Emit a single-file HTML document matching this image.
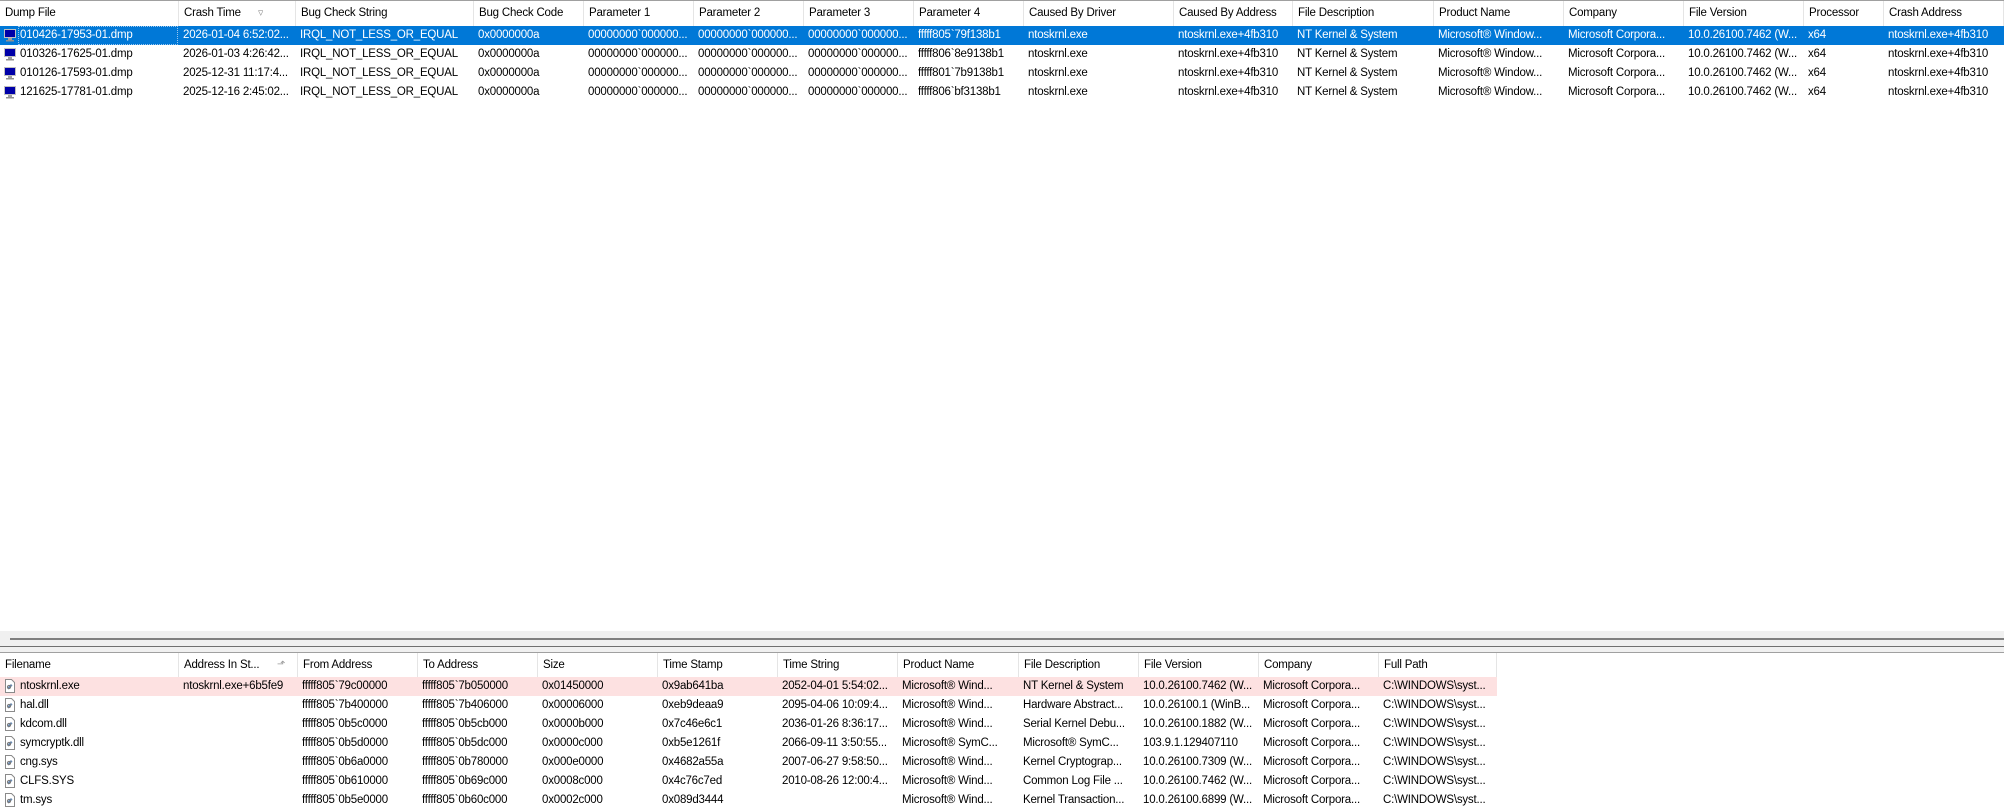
<!DOCTYPE html>
<html><head><meta charset="utf-8"><style>
*{margin:0;padding:0;box-sizing:border-box}
body{width:2004px;height:802px;overflow:hidden;background:#fff;font-family:"Liberation Sans",sans-serif;font-size:11.5px;letter-spacing:-0.2px;color:#000;position:relative}
.a{position:absolute;white-space:nowrap;overflow:hidden}
.h{position:absolute;height:26px;line-height:26px;border-right:1px solid #e5e5e5;padding-left:5px;white-space:nowrap;overflow:hidden}
.c{position:absolute;height:19px;line-height:19px;padding-left:4px;white-space:nowrap;overflow:hidden}
.mon{position:absolute;width:14px;height:14px}
.doc{position:absolute;width:12px;height:14px}
</style></head><body>
<div class="a" style="left:0;top:0;width:2004px;height:1px;background:#a0a0a0"></div>
<div class="a" style="left:0;top:26px;width:2004px;height:19px;background:#0078d7"></div>
<div class="a" style="left:18px;top:26px;width:160px;height:19px;border:1px dotted #9cc8f0"></div>
<div class="a" style="left:0;top:631px;width:2004px;height:21px;background:#f0f0f0"></div>
<div class="a" style="left:10px;top:638px;width:1994px;height:2px;background:#808080"></div>
<div class="a" style="left:0;top:646px;width:2004px;height:1px;background:#707070"></div>
<div class="a" style="left:0;top:652px;width:2004px;height:1px;background:#a0a0a0"></div>
<div class="a" style="left:0;top:677px;width:1497px;height:19px;background:#fde1e1"></div>
<script>
function mk(h){document.body.insertAdjacentHTML('beforeend',h)}
var tx=[0,179,296,474,584,694,804,914,1024,1174,1293,1434,1564,1684,1804,1884,2004];
var th=["Dump File","Crash Time","Bug Check String","Bug Check Code","Parameter 1","Parameter 2","Parameter 3","Parameter 4","Caused By Driver","Caused By Address","File Description","Product Name","Company","File Version","Processor","Crash Address"];
for(var i=0;i<th.length;i++)mk('<div class="h" style="top:1px;height:25px;line-height:25px;left:'+tx[i]+'px;width:'+(tx[i+1]-tx[i])+'px">'+th[i]+'</div>');
mk('<div class="a" style="left:258px;top:6px;color:#999;font-size:11px">&#x25BF;</div>');
var z="00000000`000000...";
var tr=[["010426-17953-01.dmp","2026-01-04 6:52:02...","fffff805`79f138b1"],["010326-17625-01.dmp","2026-01-03 4:26:42...","fffff806`8e9138b1"],["010126-17593-01.dmp","2025-12-31 11:17:4...","fffff801`7b9138b1"],["121625-17781-01.dmp","2025-12-16 2:45:02...","fffff806`bf3138b1"]];
for(var r=0;r<4;r++){var y=26+19*r,col=r==0?'#fff':'#000';
var v=[tr[r][0],tr[r][1],"IRQL_NOT_LESS_OR_EQUAL","0x0000000a",z,z,z,tr[r][2],"ntoskrnl.exe","ntoskrnl.exe+4fb310","NT Kernel &amp; System","Microsoft® Window...","Microsoft Corpora...","10.0.26100.7462 (W...","x64","ntoskrnl.exe+4fb310"];
mk('<svg class="mon" style="left:3px;top:'+(y+2)+'px" viewBox="0 0 14 14"><rect x="1" y="1" width="12" height="9" fill="#c0c0c0"/><rect x="2" y="2" width="10" height="7" fill="#0000a8"/><rect x="5" y="10" width="4" height="2" fill="#a0a0a0"/><rect x="3" y="12" width="8" height="1.5" fill="#909090"/></svg>');
for(var i=0;i<16;i++)mk('<div class="c" style="color:'+col+';top:'+y+'px;left:'+(i==0?18:tx[i])+'px;width:'+(i==0?161:tx[i+1]-tx[i])+'px;'+(i==0?'padding-left:2px':'')+'">'+v[i]+'</div>');}
var bx=[0,179,298,418,538,658,778,898,1019,1139,1259,1379,1497];
var bh=["Filename","Address In St...","From Address","To Address","Size","Time Stamp","Time String","Product Name","File Description","File Version","Company","Full Path"];
for(var i=0;i<bh.length;i++)mk('<div class="h" style="top:653px;height:24px;line-height:24px;left:'+bx[i]+'px;width:'+(bx[i+1]-bx[i])+'px">'+bh[i]+'</div>');
mk('<div class="a" style="left:277px;top:659px;color:#999;font-size:10px">&#x2B0F;</div>');
var br=[["ntoskrnl.exe","ntoskrnl.exe+6b5fe9","fffff805`79c00000","fffff805`7b050000","0x01450000","0x9ab641ba","2052-04-01 5:54:02...","Microsoft® Wind...","NT Kernel &amp; System","10.0.26100.7462 (W..."],
["hal.dll","","fffff805`7b400000","fffff805`7b406000","0x00006000","0xeb9deaa9","2095-04-06 10:09:4...","Microsoft® Wind...","Hardware Abstract...","10.0.26100.1 (WinB..."],
["kdcom.dll","","fffff805`0b5c0000","fffff805`0b5cb000","0x0000b000","0x7c46e6c1","2036-01-26 8:36:17...","Microsoft® Wind...","Serial Kernel Debu...","10.0.26100.1882 (W..."],
["symcryptk.dll","","fffff805`0b5d0000","fffff805`0b5dc000","0x0000c000","0xb5e1261f","2066-09-11 3:50:55...","Microsoft® SymC...","Microsoft® SymC...","103.9.1.129407110"],
["cng.sys","","fffff805`0b6a0000","fffff805`0b780000","0x000e0000","0x4682a55a","2007-06-27 9:58:50...","Microsoft® Wind...","Kernel Cryptograp...","10.0.26100.7309 (W..."],
["CLFS.SYS","","fffff805`0b610000","fffff805`0b69c000","0x0008c000","0x4c76c7ed","2010-08-26 12:00:4...","Microsoft® Wind...","Common Log File ...","10.0.26100.7462 (W..."],
["tm.sys","","fffff805`0b5e0000","fffff805`0b60c000","0x0002c000","0x089d3444","","Microsoft® Wind...","Kernel Transaction...","10.0.26100.6899 (W..."]];
for(var r=0;r<7;r++){var y=677+19*r,v=br[r].concat(["Microsoft Corpora...","C:\\WINDOWS\\syst..."]);
mk('<svg class="doc" style="left:4px;top:'+(y+2)+'px" viewBox="0 0 12 14"><path d="M1.5 .5h6l3 3v10h-9z" fill="#fff" stroke="#8a8a8a"/><path d="M3 9l4-4 1.5 1.5-4 4z" fill="#6a8ab0"/><circle cx="5" cy="8" r="1.6" fill="none" stroke="#7a7a7a"/></svg>');
for(var i=0;i<12;i++)mk('<div class="c" style="top:'+y+'px;left:'+(i==0?16:bx[i])+'px;width:'+(i==0?163:bx[i+1]-bx[i])+'px">'+v[i]+'</div>');}
</script>
</body></html>
